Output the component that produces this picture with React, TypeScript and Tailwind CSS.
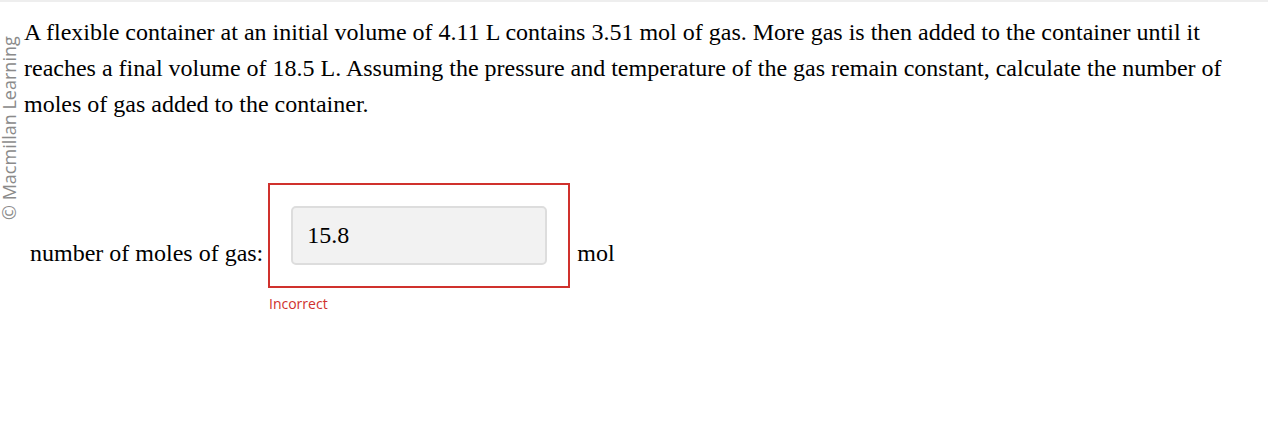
import React from "react";

const App = () => {
	return (
		<div className="w-[1268px] h-[422px] bg-white border-t-2 border-[#eeeeee] flex overflow-hidden">
			<div className="w-[24px] shrink-0 relative">
				<div className="absolute left-0 top-[218px] origin-top-left -rotate-90 whitespace-nowrap text-[18px] leading-[18px] text-[#8a8a8a] font-['Open_Sans',sans-serif]">
					© Macmillan Learning
				</div>
			</div>
			<div className="flex-1 pt-[12px] font-['Liberation_Serif',serif] text-black">
				<p className="text-[24px] leading-[36px] pr-[20px]">
					A flexible container at an initial volume of 4.11 L contains 3.51 mol of gas. More gas is then added to the container until it reaches a final volume of 18.5 L. Assuming the pressure and temperature of the gas remain constant, calculate the number of moles of gas added to the container.
				</p>
				<div className="mt-[61px] flex items-end pl-[6px]">
					<span className="text-[24px] leading-[36px] mb-[17px] mr-[5px]">number of moles of gas:</span>
					<div className="w-[302px] h-[105px] border-2 border-[#d0312d] p-[21px] pb-0">
						<div className="h-[59px] rounded-[5px] border-2 border-[#dddddd] bg-[#f2f2f2] px-[14px] pt-[13px] text-[24px] leading-[28px]">
							15.8
						</div>
					</div>
					<span className="text-[24px] leading-[36px] mb-[17px] ml-[7px]">mol</span>
				</div>
				<div className="pl-[245px] mt-[6px] text-[14px] leading-[20px] text-[#d0312d] font-['Open_Sans',sans-serif]">
					Incorrect
				</div>
			</div>
		</div>
	);
};

export default App;
